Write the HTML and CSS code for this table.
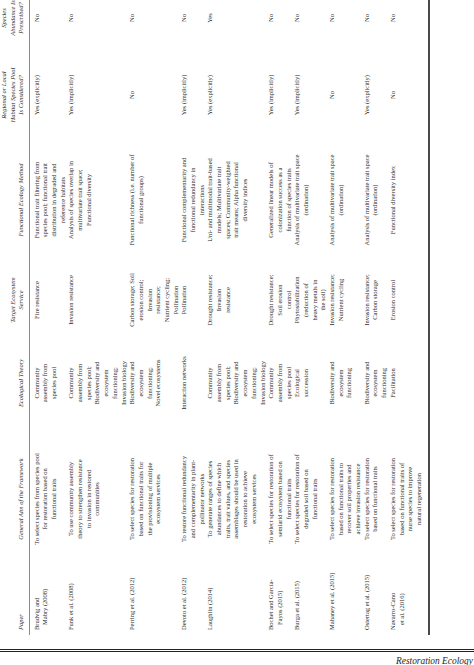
FILE: index.html
```html
<!DOCTYPE html>
<html lang="en">
<head>
<meta charset="utf-8">
<title>Functional trait frameworks for restoration</title>
<link rel="stylesheet" href="styles.css">
</head>
<body>
<div class="sheet">
  <div class="landscape">
    <div class="table">
      <div class="row head">
        <div class="cell paper">Paper</div>
        <div class="cell">General Aim of the Framework</div>
        <div class="cell">Ecological Theory</div>
        <div class="cell">Target Ecosystem<br>Service</div>
        <div class="cell">Functional Ecology Method</div>
        <div class="cell">Regional or Local<br>Habitat Species Pool<br>Is Considered?</div>
        <div class="cell">Species<br>Abundance Is<br>Prescribed?</div>
      </div>
      <div class="body">
        <div class="row">
          <div class="cell paper">Brudvig and<br>Mabry (2008)</div>
          <div class="cell">To select species from species pool<br>for restoration based on<br>functional traits</div>
          <div class="cell">Community<br>assembly from<br>species pool</div>
          <div class="cell">Fire resistance</div>
          <div class="cell">Functional trait filtering from<br>species pool; functional trait<br>distribution in degraded and<br>reference habitats</div>
          <div class="cell">Yes (explicitly)</div>
          <div class="cell">No</div>
        </div>
        <div class="row">
          <div class="cell paper">Funk et al. (2008)</div>
          <div class="cell">To use community assembly<br>theory to strengthen resistance<br>to invasion in restored<br>communities</div>
          <div class="cell">Community<br>assembly from<br>species pool;<br>Biodiversity and<br>ecosystem<br>functioning;<br>Invasion biology</div>
          <div class="cell">Invasion resistance</div>
          <div class="cell">Analysis of species overlap in<br>multivariate trait space;<br>Functional diversity</div>
          <div class="cell">Yes (implicitly)</div>
          <div class="cell">No</div>
        </div>
        <div class="row">
          <div class="cell paper">Perring et al. (2012)</div>
          <div class="cell">To select species for restoration<br>based on functional traits for<br>the provisioning of multiple<br>ecosystem services</div>
          <div class="cell">Biodiversity and<br>ecosystem<br>functioning;<br>Novel ecosystems</div>
          <div class="cell">Carbon storage; Soil<br>erosion control;<br>Invasion<br>resistance;<br>Nutrient cycling;<br>Pollination</div>
          <div class="cell">Functional richness (i.e. number of<br>functional groups)</div>
          <div class="cell">No</div>
          <div class="cell">No</div>
        </div>
        <div class="row">
          <div class="cell paper">Devoto et al. (2012)</div>
          <div class="cell">To restore functional redundancy<br>and complementarity in plant-<br>pollinator networks</div>
          <div class="cell">Interaction networks</div>
          <div class="cell">Pollination</div>
          <div class="cell">Functional complementarity and<br>functional redundancy in<br>interactions</div>
          <div class="cell">Yes (implicitly)</div>
          <div class="cell">No</div>
        </div>
        <div class="row">
          <div class="cell paper">Laughlin (2014)</div>
          <div class="cell">To generate ranges of species<br>abundances to define which<br>traits, trait values, and species<br>assemblages should be used in<br>restoration to achieve<br>ecosystem services</div>
          <div class="cell">Community<br>assembly from<br>species pool;<br>Biodiversity and<br>ecosystem<br>functioning;<br>Invasion biology</div>
          <div class="cell">Drought resistance;<br>Invasion<br>resistance</div>
          <div class="cell">Uni- and multimodal trait-based<br>models; Multivariate trait<br>spaces; Community-weighted<br>trait means; Alpha functional<br>diversity indices</div>
          <div class="cell">Yes (explicitly)</div>
          <div class="cell">Yes</div>
        </div>
        <div class="row">
          <div class="cell paper">Bochet and García-<br>Fayos (2015)</div>
          <div class="cell">To select species for restoration of<br>semiarid ecosystem based on<br>functional traits</div>
          <div class="cell">Community<br>assembly from<br>species pool</div>
          <div class="cell">Drought resistance;<br>Soil erosion<br>control</div>
          <div class="cell">Generalized linear models of<br>colonization success as a<br>function of species traits</div>
          <div class="cell">Yes (implicitly)</div>
          <div class="cell">No</div>
        </div>
        <div class="row">
          <div class="cell paper">Burga et al. (2015)</div>
          <div class="cell">To select species for restoration of<br>degraded soil based on<br>functional traits</div>
          <div class="cell">Ecological<br>succession</div>
          <div class="cell">Phytostabilization<br>(reduction of<br>heavy metals in<br>the soil)</div>
          <div class="cell">Analysis of multivariate trait space<br>(ordination)</div>
          <div class="cell">Yes (implicitly)</div>
          <div class="cell">No</div>
        </div>
        <div class="row">
          <div class="cell paper">Mahaney et al. (2015)</div>
          <div class="cell">To select species for restoration<br>based on functional traits to<br>recover soil properties and<br>achieve invasion resistance</div>
          <div class="cell">Biodiversity and<br>ecosystem<br>functioning</div>
          <div class="cell">Invasion resistance;<br>Nutrient cycling</div>
          <div class="cell">Analysis of multivariate trait space<br>(ordination)</div>
          <div class="cell">No</div>
          <div class="cell">No</div>
        </div>
        <div class="row">
          <div class="cell paper">Ostertag et al. (2015)</div>
          <div class="cell">To select species for restoration<br>based on functional traits</div>
          <div class="cell">Biodiversity and<br>ecosystem<br>functioning</div>
          <div class="cell">Invasion resistance;<br>Carbon storage</div>
          <div class="cell">Analysis of multivariate trait space<br>(ordination)</div>
          <div class="cell">Yes (explicitly)</div>
          <div class="cell">No</div>
        </div>
        <div class="row">
          <div class="cell paper">Navarro-Cano<br>et al. (2016)</div>
          <div class="cell">To select species for restoration<br>based on functional traits of<br>nurse species to improve<br>natural regeneration</div>
          <div class="cell">Facilitation</div>
          <div class="cell">Erosion control</div>
          <div class="cell">Functional diversity index</div>
          <div class="cell">No</div>
          <div class="cell">No</div>
        </div>
      </div>
    </div>
  </div>
  <div class="foot">Restoration Ecology</div>
</div>
</body>
</html>
```

FILE: styles.css
```css
html, body {
  margin: 0;
  padding: 0;
  background: #ffffff;
}

body {
  width: 474px;
  height: 665px;
  overflow: hidden;
  font-family: "Liberation Serif", "Times New Roman", serif;
  color: #2b2b2b;
}

.sheet {
  display: flex;
  flex-direction: column;
}

.landscape {
  height: 649px;
  overflow: hidden;
}

.table {
  width: 661px;
  transform-origin: 0 0;
  transform: translateY(635px) rotate(-90deg);
  font-size: 6.5px;
  line-height: 8.68px;
}

.row {
  display: grid;
  grid-template-columns: 75px 122px 110px 56px 144px 66px 88px;
}

.cell {
  text-align: center;
  white-space: nowrap;
}

.cell.paper {
  text-align: left;
  padding-left: 10px;
  text-indent: -5px;
}

.head {
  padding-bottom: 3px;
  border-bottom: 1px solid #8a8a8a;
  font-style: italic;
}

.head .cell {
  align-self: end;
}

.body {
  padding: 2.6px 0 4px;
  border-bottom: 2px solid #4a4a4a;
}

.foot {
  border-top: 3px double #222222;
  padding: 3px 0 0 396px;
  font-style: italic;
  font-size: 9.4px;
  line-height: 12px;
  white-space: nowrap;
  color: #1e1e1e;
}
```
